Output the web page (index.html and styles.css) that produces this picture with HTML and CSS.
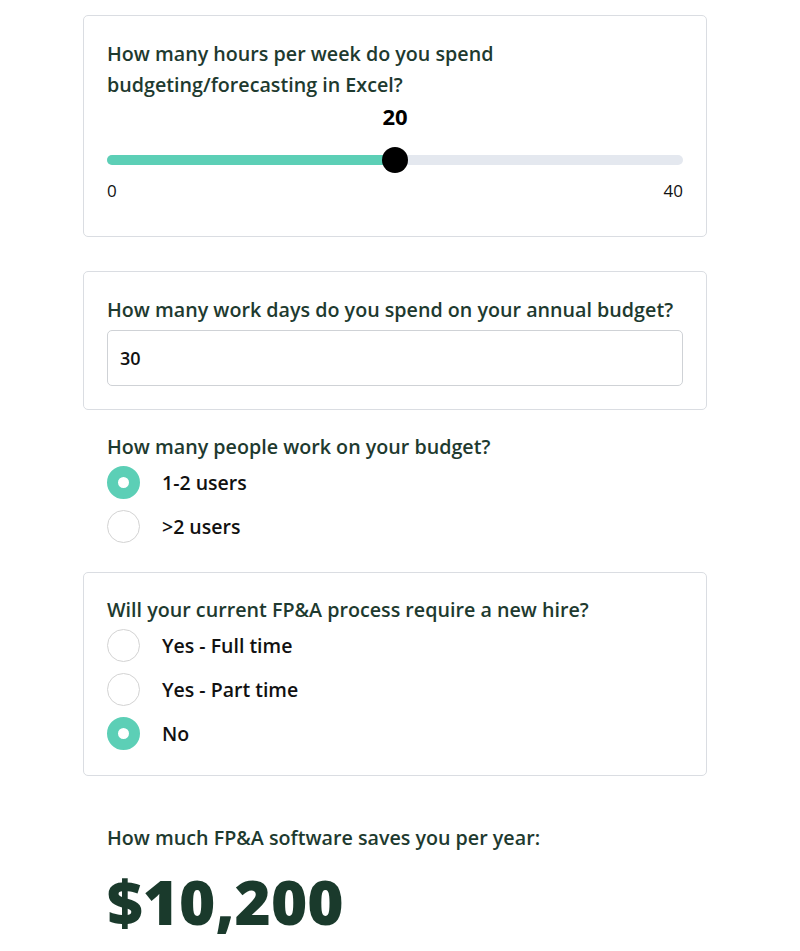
FILE: index.html
```html
<!DOCTYPE html>
<html lang="en">
<head>
  <meta charset="UTF-8" />
  <meta name="viewport" content="width=device-width, initial-scale=1.0" />
  <title>FP&amp;A Savings Calculator</title>
  <link rel="stylesheet" href="styles.css">
</head>
<body>
  <div class="calculator">
    <!-- Hours slider -->
    <div class="card card-hours">
      <div class="question">How many hours per week do you spend<br>budgeting/forecasting in Excel?</div>
      <div class="slider-value">20</div>
      <div class="slider">
        <div class="track">
          <div class="track-fill" style="width: 50%"></div>
        </div>
        <div class="thumb" style="left: 50%"></div>
      </div>
      <div class="slider-labels">
        <span>0</span>
        <span>40</span>
      </div>
    </div>

    <!-- Work days -->
    <div class="card card-days">
      <div class="question">How many work days do you spend on your annual budget?</div>
      <input class="text-input" type="text" value="30" />
    </div>

    <!-- People -->
    <div class="plain-group">
      <div class="question group-question">How many people work on your budget?</div>
      <label class="radio-row">
        <span class="radio checked"></span>
        <span>1-2 users</span>
      </label>
      <label class="radio-row">
        <span class="radio"></span>
        <span>&gt;2 users</span>
      </label>
    </div>

    <!-- New hire -->
    <div class="card card-hire">
      <div class="question group-question">Will your current FP&amp;A process require a new hire?</div>
      <label class="radio-row">
        <span class="radio"></span>
        <span>Yes - Full time</span>
      </label>
      <label class="radio-row">
        <span class="radio"></span>
        <span>Yes - Part time</span>
      </label>
      <label class="radio-row">
        <span class="radio checked"></span>
        <span>No</span>
      </label>
    </div>

    <div class="result">
      <div class="question">How much FP&amp;A software saves you per year:</div>
      <div class="amount">$10,200</div>
    </div>
  </div>
</body>
</html>
```

FILE: styles.css
```css
body {
  margin: 0;
  padding: 0;
  background: #fff;
  font-family: "Open Sans", "Noto Sans", sans-serif;
  color: #1e3a2f;
}

.calculator {
  width: 624px;
  margin: 15px 0 0 83px;
}

.card {
  border: 1px solid #dadde2;
  border-radius: 5px;
  padding: 22px 23px 33px 23px;
  margin-bottom: 34px;
}

.question {
  font-size: 19.7px;
  font-weight: 600;
  line-height: 31px;
  color: #1e3a2f;
}

.group-question {
  margin-bottom: -2px;
}

/* Slider */
.card-hours {
  padding-bottom: 33px;
}

.slider-value {
  margin-top: 2px;
  text-align: center;
  font-size: 22px;
  font-weight: 700;
  line-height: 28px;
  color: #000;
}

.slider {
  position: relative;
  height: 26px;
  margin-top: 17px;
  display: flex;
  align-items: center;
}

.track {
  width: 100%;
  height: 10px;
  border-radius: 5px;
  background: #e4e8ef;
  overflow: hidden;
}

.track-fill {
  height: 100%;
  background: #5ccfb6;
}

.thumb {
  position: absolute;
  top: 0;
  width: 26px;
  height: 26px;
  margin-left: -13px;
  border-radius: 50%;
  background: #000;
}

.slider-labels {
  display: flex;
  justify-content: space-between;
  margin-top: 6px;
  font-size: 17px;
  line-height: 24px;
  color: #111;
}

/* Work days input */
.card-days {
  padding-bottom: 23px;
  margin-bottom: 21px;
}

.text-input {
  display: block;
  box-sizing: border-box;
  width: 100%;
  height: 56px;
  margin-top: 5px;
  padding: 0 12px;
  border: 1px solid #cfd2d6;
  border-radius: 5px;
  font-family: inherit;
  font-size: 18px;
  font-weight: 600;
  color: #111;
  outline: none;
}

/* Radios */
.plain-group {
  padding: 0 24px;
  margin-bottom: 24px;
}

.radio-row {
  display: flex;
  align-items: center;
  height: 44px;
  font-size: 19.5px;
  font-weight: 600;
  color: #111;
  cursor: pointer;
}

.radio {
  box-sizing: border-box;
  width: 33px;
  height: 33px;
  margin-right: 22px;
  border-radius: 50%;
  border: 1.5px solid #d3d3d3;
  background: #fff;
}

.radio.checked {
  border: 11.5px solid #5ccfb6;
}

.card-hire {
  padding-top: 21px;
  padding-bottom: 20px;
}

/* Result */
.result {
  padding: 0 24px;
  margin-top: 46px;
}

.amount {
  margin-top: 12px;
  font-size: 62px;
  font-weight: 800;
  line-height: 72px;
  color: #1a3a2c;
}
```
